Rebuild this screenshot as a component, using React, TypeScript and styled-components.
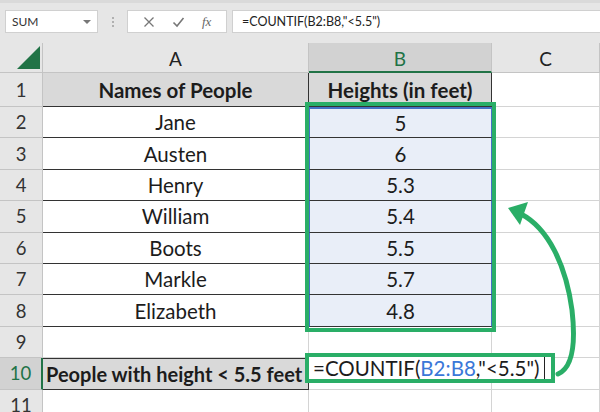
import React from 'react';
import styled, { createGlobalStyle, css } from 'styled-components';

const GlobalStyle = createGlobalStyle`
    html, body {
        margin: 0;
        padding: 0;
        background: #ffffff;
    }
    body {
        width: 600px;
        height: 412px;
        overflow: hidden;
        font-family: Lato, "Open Sans", "Liberation Sans", sans-serif;
    }
`;

const GREEN = '#2aae67';
const EXCEL_GREEN = '#217346';

const Window = styled.div`
    position: relative;
    width: 600px;
    height: 412px;
    display: flex;
    flex-direction: column;
    background: #e6e6e6;
    overflow: hidden;
`;

const FormulaBar = styled.div`
    flex-shrink: 0;
    height: 43px;
    box-sizing: border-box;
    border-top: 3px solid #dadada;
    padding: 7px 0 0 5px;
    display: flex;
    align-items: flex-start;
`;

const NameBox = styled.div`
    width: 93px;
    height: 23px;
    box-sizing: border-box;
    background: #fff;
    border: 1px solid #d0d0d0;
    display: flex;
    align-items: center;
    justify-content: space-between;
    padding: 0 6px;
    font-size: 12px;
    color: #333;
`;

const DropArrow = styled.span`
    width: 0;
    height: 0;
    border-left: 4px solid transparent;
    border-right: 4px solid transparent;
    border-top: 4px solid #777;
`;

const Grip = styled.div`
    width: 29px;
    height: 23px;
    display: flex;
    flex-direction: column;
    align-items: center;
    justify-content: center;
    gap: 2px;
    span {
        width: 2px;
        height: 2px;
        background: #b0b0b0;
    }
`;

const ButtonGroup = styled.div`
    width: 100px;
    height: 23px;
    box-sizing: border-box;
    background: #fff;
    border: 1px solid #d0d0d0;
    display: flex;
    align-items: center;
    justify-content: space-around;
    padding: 0 6px;
`;

const Fx = styled.span`
    font-family: "Liberation Serif", serif;
    font-style: italic;
    font-size: 13px;
    color: #666;
`;

const FormulaInput = styled.div`
    flex: 1;
    margin-left: 5px;
    height: 23px;
    box-sizing: border-box;
    background: #fff;
    border: 1px solid #d0d0d0;
    border-right: none;
    display: flex;
    align-items: center;
    padding-left: 9px;
    font-size: 12.5px;
    color: #222;
`;

const Sheet = styled.div`
    flex-shrink: 0;
    display: grid;
    grid-template-columns: 43px 266px 183px 108px;
    grid-template-rows: 30px 34px repeat(10, 31.4px);
    background: #fff;
`;

const Corner = styled.div`
    background: #e6e6e6;
    border-right: 1px solid #c4c4c4;
    border-bottom: 1px solid #c4c4c4;
    display: flex;
    align-items: flex-end;
    justify-content: flex-end;
    padding: 0 2px 3px 0;
    &::after {
        content: '';
        width: 0;
        height: 0;
        border-left: 23px solid transparent;
        border-bottom: 23px solid ${EXCEL_GREEN};
    }
`;

const ColHead = styled.div<{ $active?: boolean }>`
    background: ${(p) => (p.$active ? '#d2d2d2' : '#e6e6e6')};
    border-right: 1px solid #c4c4c4;
    border-bottom: ${(p) => (p.$active ? `2px solid ${EXCEL_GREEN}` : '1px solid #c4c4c4')};
    color: ${(p) => (p.$active ? EXCEL_GREEN : '#222')};
    font-size: 19px;
    display: flex;
    align-items: center;
    justify-content: center;
    padding-top: 2px;
`;

const RowHead = styled.div<{ $active?: boolean }>`
    background: ${(p) => (p.$active ? '#d2d2d2' : '#e6e6e6')};
    border-right: ${(p) => (p.$active ? `2px solid ${EXCEL_GREEN}` : '1px solid #c4c4c4')};
    border-bottom: 1px solid #c4c4c4;
    color: ${(p) => (p.$active ? EXCEL_GREEN : '#333')};
    font-size: 18.5px;
    display: flex;
    align-items: center;
    justify-content: center;
`;

const Cell = styled.div<{ $table?: boolean; $head?: boolean; $picked?: boolean; $first?: boolean; $top?: boolean }>`
    box-sizing: border-box;
    border-right: 1px solid #d4d4d4;
    border-bottom: 1px solid #d4d4d4;
    display: flex;
    align-items: center;
    justify-content: center;
    font-size: 20.5px;
    color: #1c1c1c;
    white-space: nowrap;
    ${(p) =>
        p.$table &&
        css`
            border-right: 1px solid #333;
            border-bottom: 1px solid #333;
        `}
    ${(p) =>
        p.$top &&
        css`
            border-top: 1px solid #333;
        `}
    ${(p) =>
        p.$head &&
        css`
            background: #d9d9d9;
            font-weight: 700;
            font-size: 20.5px;
        `}
    ${(p) =>
        p.$picked &&
        css`
            background: #e9eef8;
            border-left: 1px solid #4472c4;
            border-right: 1px solid #4472c4;
        `}
    ${(p) =>
        p.$first &&
        css`
            border-top: 2px solid #4472c4;
        `}
`;

const LeftCell = styled(Cell)`
    justify-content: flex-start;
    padding-left: 3px;
    font-size: 20px;
`;

const Highlight = styled.div`
    position: absolute;
    box-sizing: border-box;
    border: 4px solid ${GREEN};
    pointer-events: none;
`;

const EditBox = styled.div`
    position: absolute;
    box-sizing: border-box;
    border: 4px solid ${GREEN};
    background: #fff;
    display: flex;
    align-items: center;
    padding-left: 4px;
    font-size: 20.5px;
    line-height: 1;
    color: #1c1c1c;
    white-space: nowrap;
`;

const Ref = styled.span`
    color: #3a77d8;
`;

const Caret = styled.span`
    display: inline-block;
    width: 1px;
    height: 22px;
    margin-left: 4px;
    background: #222;
`;

const Overlay = styled.svg`
    position: absolute;
    left: 0;
    top: 0;
    pointer-events: none;
`;

const names = ['Jane', 'Austen', 'Henry', 'William', 'Boots', 'Markle', 'Elizabeth'];
const heights = ['5', '6', '5.3', '5.4', '5.5', '5.7', '4.8'];

export default function App() {
    return (
        <>
            <GlobalStyle />
            <Window>
                <FormulaBar>
                    <NameBox>
                        SUM
                        <DropArrow />
                    </NameBox>
                    <Grip>
                        <span />
                        <span />
                        <span />
                    </Grip>
                    <ButtonGroup>
                        <svg width="12" height="12" viewBox="0 0 12 12">
                            <path d="M1.5 1.5 L10.5 10.5 M10.5 1.5 L1.5 10.5" stroke="#777" strokeWidth="1.3" />
                        </svg>
                        <svg width="13" height="12" viewBox="0 0 13 12">
                            <path d="M1.5 6.5 L5 10 L11.5 2" stroke="#777" strokeWidth="1.6" fill="none" />
                        </svg>
                        <Fx>fx</Fx>
                    </ButtonGroup>
                    <FormulaInput>=COUNTIF(B2:B8,"&lt;5.5")</FormulaInput>
                </FormulaBar>
                <Sheet>
                    <Corner />
                    <ColHead>A</ColHead>
                    <ColHead $active>B</ColHead>
                    <ColHead>C</ColHead>

                    <RowHead>1</RowHead>
                    <Cell $table $head>
                        Names of People
                    </Cell>
                    <Cell $table $head>
                        Heights (in feet)
                    </Cell>
                    <Cell />

                    {names.map((name, i) => (
                        <React.Fragment key={name}>
                            <RowHead>{i + 2}</RowHead>
                            <Cell $table>{name}</Cell>
                            <Cell $table $picked $first={i === 0}>
                                {heights[i]}
                            </Cell>
                            <Cell />
                        </React.Fragment>
                    ))}

                    <RowHead>9</RowHead>
                    <Cell />
                    <Cell />
                    <Cell />

                    <RowHead $active>10</RowHead>
                    <LeftCell $table $head $top>
                        People with height &lt; 5.5 feet
                    </LeftCell>
                    <Cell />
                    <Cell />

                    <RowHead>11</RowHead>
                    <Cell />
                    <Cell />
                    <Cell />
                </Sheet>

                <Highlight style={{ left: 305, top: 102, width: 191, height: 230 }} />
                <EditBox style={{ left: 305, top: 353, width: 250, height: 30 }}>
                    =COUNTIF(<Ref>B2:B8</Ref>,"&lt;5.5")
                    <Caret />
                </EditBox>
                <Overlay width="600" height="412" viewBox="0 0 600 412">
                    <path
                        d="M521 214 C548 228, 566 265, 572 310 C576 345, 572 368, 558 374"
                        stroke={GREEN}
                        strokeWidth="5"
                        fill="none"
                        strokeLinecap="round"
                    />
                    <polygon points="508,208 528,202 520,225" fill={GREEN} />
                </Overlay>
            </Window>
        </>
    );
}
